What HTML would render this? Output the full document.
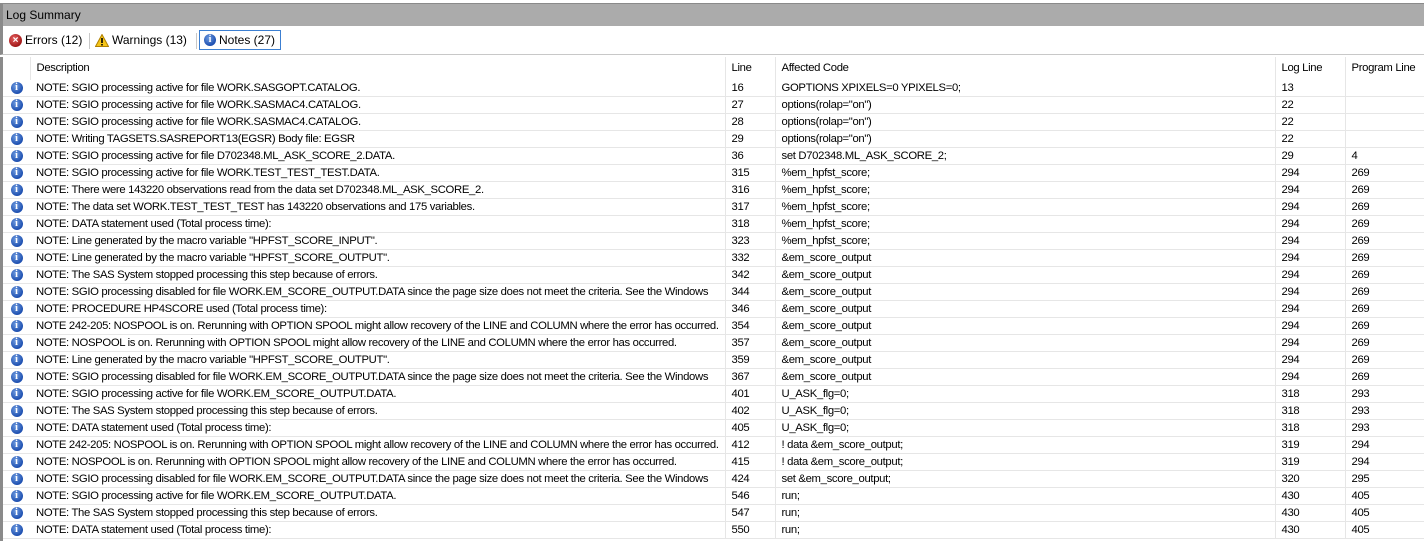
<!DOCTYPE html>
<html><head><style>
body{margin:0;width:1424px;height:541px;overflow:hidden;background:#fff;font-family:"Liberation Sans",Arial,sans-serif;}
.title{position:absolute;left:0;top:3px;width:1424px;height:23px;background:#ababab;border-top:1px solid #8a8a8a;border-left:3px solid #8a8a8a;box-sizing:border-box;font-size:12px;color:#000;line-height:22px;padding-left:3px;}
.tb{position:absolute;left:0;top:26px;width:1424px;height:29px;background:#fff;border-left:3px solid #8a8a8a;box-sizing:border-box;border-bottom:1px solid #c8c8c8;}
.btn{position:absolute;top:4px;height:20px;font-size:12px;box-sizing:border-box;display:flex;align-items:center;gap:3px;}
.sep{position:absolute;top:7px;width:1px;height:16px;background:#c8c8c8;}
.grid{position:absolute;left:0;top:57px;width:1424px;height:484px;border-left:3px solid #8a8a8a;box-sizing:border-box;}
table{border-collapse:collapse;table-layout:fixed;width:1421px;font-size:11.3px;letter-spacing:-0.33px;position:absolute;left:0;top:0;}
td{height:16px;padding:0 0 0 6px;border-bottom:1px solid #e6e6e6;border-right:1px solid #e6e6e6;white-space:nowrap;overflow:hidden;line-height:16px;}
tr.h td{height:23px;line-height:23px;border-bottom:none;}
td.i{padding:0;text-align:center;border-right:none}
.ic{display:inline-block;width:12px;height:12px;border-radius:50%;background:radial-gradient(circle at 40% 35%,#6e9be0,#1d4fb0 70%);color:#fff;font:bold 10px/12px "Liberation Serif",serif;text-align:center;vertical-align:middle;letter-spacing:0}
</style></head><body>
<div class="title">Log Summary</div>
<div class="tb">
<div class="btn" style="left:6px;width:80px"><span style="display:inline-block;width:13px;height:13px;border-radius:50%;background:radial-gradient(circle at 40% 35%,#e86060,#a01818 70%);color:#fff;font:bold 10px/13px sans-serif;text-align:center">×</span>Errors (12)</div>
<div class="sep" style="left:86px"></div>
<div class="btn" style="left:92px;width:100px"><svg width="14" height="13"><path d="M7 0.5 L13.5 12.5 L0.5 12.5Z" fill="#f5c518" stroke="#b08000"/><rect x="6.2" y="4" width="1.6" height="5" fill="#000"/><rect x="6.2" y="10" width="1.6" height="1.5" fill="#000"/></svg>Warnings (13)</div>
<div class="sep" style="left:193px"></div>
<div class="btn" style="left:196px;width:82px;border:1px solid #3c7fd1;padding-left:4px"><span class="ic">i</span>Notes (27)</div>
</div>
<div class="grid"><table>
<colgroup><col style="width:27px"><col style="width:695px"><col style="width:50px"><col style="width:500px"><col style="width:70px"><col style="width:79px"></colgroup>
<tr class="h"><td class="i" style="border-right:1px solid #e6e6e6"></td><td>Description</td><td>Line</td><td>Affected Code</td><td>Log Line</td><td>Program Line</td></tr>
<tr><td class="i"><span class="ic">i</span></td><td>NOTE: SGIO processing active for file WORK.SASGOPT.CATALOG.</td><td>16</td><td>GOPTIONS XPIXELS=0 YPIXELS=0;</td><td>13</td><td></td></tr>
<tr><td class="i"><span class="ic">i</span></td><td>NOTE: SGIO processing active for file WORK.SASMAC4.CATALOG.</td><td>27</td><td>options(rolap="on")</td><td>22</td><td></td></tr>
<tr><td class="i"><span class="ic">i</span></td><td>NOTE: SGIO processing active for file WORK.SASMAC4.CATALOG.</td><td>28</td><td>options(rolap="on")</td><td>22</td><td></td></tr>
<tr><td class="i"><span class="ic">i</span></td><td>NOTE: Writing TAGSETS.SASREPORT13(EGSR) Body file: EGSR</td><td>29</td><td>options(rolap="on")</td><td>22</td><td></td></tr>
<tr><td class="i"><span class="ic">i</span></td><td>NOTE: SGIO processing active for file D702348.ML_ASK_SCORE_2.DATA.</td><td>36</td><td>set D702348.ML_ASK_SCORE_2;</td><td>29</td><td>4</td></tr>
<tr><td class="i"><span class="ic">i</span></td><td>NOTE: SGIO processing active for file WORK.TEST_TEST_TEST.DATA.</td><td>315</td><td>%em_hpfst_score;</td><td>294</td><td>269</td></tr>
<tr><td class="i"><span class="ic">i</span></td><td>NOTE: There were 143220 observations read from the data set D702348.ML_ASK_SCORE_2.</td><td>316</td><td>%em_hpfst_score;</td><td>294</td><td>269</td></tr>
<tr><td class="i"><span class="ic">i</span></td><td>NOTE: The data set WORK.TEST_TEST_TEST has 143220 observations and 175 variables.</td><td>317</td><td>%em_hpfst_score;</td><td>294</td><td>269</td></tr>
<tr><td class="i"><span class="ic">i</span></td><td>NOTE: DATA statement used (Total process time):</td><td>318</td><td>%em_hpfst_score;</td><td>294</td><td>269</td></tr>
<tr><td class="i"><span class="ic">i</span></td><td>NOTE: Line generated by the macro variable "HPFST_SCORE_INPUT".</td><td>323</td><td>%em_hpfst_score;</td><td>294</td><td>269</td></tr>
<tr><td class="i"><span class="ic">i</span></td><td>NOTE: Line generated by the macro variable "HPFST_SCORE_OUTPUT".</td><td>332</td><td>&amp;em_score_output</td><td>294</td><td>269</td></tr>
<tr><td class="i"><span class="ic">i</span></td><td>NOTE: The SAS System stopped processing this step because of errors.</td><td>342</td><td>&amp;em_score_output</td><td>294</td><td>269</td></tr>
<tr><td class="i"><span class="ic">i</span></td><td>NOTE: SGIO processing disabled for file WORK.EM_SCORE_OUTPUT.DATA since the page size does not meet the criteria. See the Windows</td><td>344</td><td>&amp;em_score_output</td><td>294</td><td>269</td></tr>
<tr><td class="i"><span class="ic">i</span></td><td>NOTE: PROCEDURE HP4SCORE used (Total process time):</td><td>346</td><td>&amp;em_score_output</td><td>294</td><td>269</td></tr>
<tr><td class="i"><span class="ic">i</span></td><td>NOTE 242-205: NOSPOOL is on. Rerunning with OPTION SPOOL might allow recovery of the LINE and COLUMN where the error has occurred.</td><td>354</td><td>&amp;em_score_output</td><td>294</td><td>269</td></tr>
<tr><td class="i"><span class="ic">i</span></td><td>NOTE: NOSPOOL is on. Rerunning with OPTION SPOOL might allow recovery of the LINE and COLUMN where the error has occurred.</td><td>357</td><td>&amp;em_score_output</td><td>294</td><td>269</td></tr>
<tr><td class="i"><span class="ic">i</span></td><td>NOTE: Line generated by the macro variable "HPFST_SCORE_OUTPUT".</td><td>359</td><td>&amp;em_score_output</td><td>294</td><td>269</td></tr>
<tr><td class="i"><span class="ic">i</span></td><td>NOTE: SGIO processing disabled for file WORK.EM_SCORE_OUTPUT.DATA since the page size does not meet the criteria. See the Windows</td><td>367</td><td>&amp;em_score_output</td><td>294</td><td>269</td></tr>
<tr><td class="i"><span class="ic">i</span></td><td>NOTE: SGIO processing active for file WORK.EM_SCORE_OUTPUT.DATA.</td><td>401</td><td>U_ASK_flg=0;</td><td>318</td><td>293</td></tr>
<tr><td class="i"><span class="ic">i</span></td><td>NOTE: The SAS System stopped processing this step because of errors.</td><td>402</td><td>U_ASK_flg=0;</td><td>318</td><td>293</td></tr>
<tr><td class="i"><span class="ic">i</span></td><td>NOTE: DATA statement used (Total process time):</td><td>405</td><td>U_ASK_flg=0;</td><td>318</td><td>293</td></tr>
<tr><td class="i"><span class="ic">i</span></td><td>NOTE 242-205: NOSPOOL is on. Rerunning with OPTION SPOOL might allow recovery of the LINE and COLUMN where the error has occurred.</td><td>412</td><td>! data &amp;em_score_output;</td><td>319</td><td>294</td></tr>
<tr><td class="i"><span class="ic">i</span></td><td>NOTE: NOSPOOL is on. Rerunning with OPTION SPOOL might allow recovery of the LINE and COLUMN where the error has occurred.</td><td>415</td><td>! data &amp;em_score_output;</td><td>319</td><td>294</td></tr>
<tr><td class="i"><span class="ic">i</span></td><td>NOTE: SGIO processing disabled for file WORK.EM_SCORE_OUTPUT.DATA since the page size does not meet the criteria. See the Windows</td><td>424</td><td>set &amp;em_score_output;</td><td>320</td><td>295</td></tr>
<tr><td class="i"><span class="ic">i</span></td><td>NOTE: SGIO processing active for file WORK.EM_SCORE_OUTPUT.DATA.</td><td>546</td><td>run;</td><td>430</td><td>405</td></tr>
<tr><td class="i"><span class="ic">i</span></td><td>NOTE: The SAS System stopped processing this step because of errors.</td><td>547</td><td>run;</td><td>430</td><td>405</td></tr>
<tr><td class="i"><span class="ic">i</span></td><td>NOTE: DATA statement used (Total process time):</td><td>550</td><td>run;</td><td>430</td><td>405</td></tr>
</table></div>
</body></html>
